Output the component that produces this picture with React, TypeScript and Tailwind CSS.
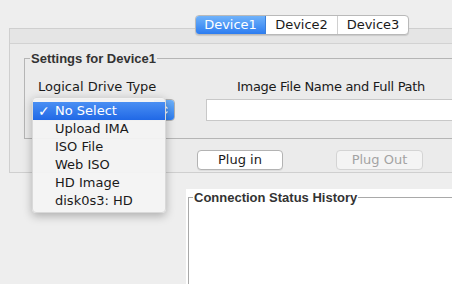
import React from "react";

const font = { fontFamily: '"DejaVu Sans", "Liberation Sans", sans-serif' };
const boldFont = { fontFamily: '"Liberation Sans", Arial, sans-serif' };

const items = ["No Select", "Upload IMA", "ISO File", "Web ISO", "HD Image", "disk0s3: HD"];

export default function App() {
  return (
    <div
      className="relative w-[452px] h-[284px] overflow-hidden bg-[#eeeeee] text-[13px] text-[#1a1a1a]"
      style={font}
    >
      {/* Tabs */}
      <div className="relative z-10 flex pt-[15px] pl-[195px] -mb-[7px]">
        <div className="flex h-[20px] rounded-[4px] border border-[#b9b9b9] bg-white shadow-[0_1px_1px_rgba(0,0,0,0.12)] overflow-hidden leading-[18px]">
          <div className="w-[70px] text-center text-white bg-gradient-to-b from-[#6fb2fa] to-[#2c7cf0] border-r border-[#3b7fd8]">
            Device1
          </div>
          <div className="w-[72px] text-center border-r border-[#d0d0d0]">Device2</div>
          <div className="w-[70px] text-center">Device3</div>
        </div>
      </div>

      {/* Tab panel */}
      <div className="ml-[9px] border-t border-l border-b border-[#cfcfcf] bg-[#ebebeb]">
        <div className="h-[15px] bg-[#e5e5e5] border-b border-[#d2d2d2]" />
        <div className="pl-[14px] pt-[7px] pb-[2px]">
          <fieldset className="border-t border-l border-b border-[#b5b5b5] pb-[17px] pl-[5px]">
            <legend
              className="px-[1px] text-[13px] font-bold leading-[15px] text-[#333]"
              style={boldFont}
            >
              Settings for Device1
            </legend>
            <div className="flex mt-[13px] pl-[3px]">
              <div className="w-[142px] shrink-0">
                <div className="pl-[5px] leading-[16px]">Logical Drive Type</div>
                <div className="mt-[4px] flex h-[22px] rounded-[4px] border border-[#b0b0b0] bg-white overflow-hidden">
                  <div className="flex-1" />
                  <div className="w-[20px] bg-gradient-to-b from-[#6fb2fa] to-[#2c7cf0] flex flex-col items-center justify-center gap-[2px]">
                    <svg width="7" height="4" viewBox="0 0 7 4">
                      <path d="M0.5 3.5 L3.5 0.5 L6.5 3.5" fill="none" stroke="white" strokeWidth="1.2" />
                    </svg>
                    <svg width="7" height="4" viewBox="0 0 7 4">
                      <path d="M0.5 0.5 L3.5 3.5 L6.5 0.5" fill="none" stroke="white" strokeWidth="1.2" />
                    </svg>
                  </div>
                </div>
              </div>
              <div className="ml-[31px] flex-1">
                <div className="pl-[31px] leading-[16px] tracking-[-0.3px]">Image File Name and Full Path</div>
                <div className="mt-[4px] h-[22px] border border-[#c8c8c8] border-r-0 bg-white" />
              </div>
            </div>
          </fieldset>

          <div className="flex mt-[11px] pl-[173px] gap-[53px]">
            <div className="w-[86px] h-[20px] rounded-[4px] border border-[#b3b3b3] bg-white text-center leading-[18px] shadow-[0_1px_0_rgba(0,0,0,0.06)]">
              Plug in
            </div>
            <div className="w-[87px] h-[20px] rounded-[4px] border border-[#d4d4d4] bg-[#f4f4f4] text-center leading-[18px] text-[#a3a3a3]">
              Plug Out
            </div>
          </div>
        </div>
      </div>

      {/* Connection status */}
      <div className="ml-[186px] mt-[16px] h-[120px] bg-white pl-[2px] pt-[1px]">
        <fieldset className="border-t border-l border-[#a9a9a9] h-[110px]">
          <legend
            className="ml-[4px] px-[1px] text-[13px] font-bold leading-[15px] text-[#333]"
            style={boldFont}
          >
            Connection Status History
          </legend>
        </fieldset>
      </div>

      {/* Popup menu */}
      <div className="absolute left-[32px] top-[97px] w-[134px] h-[116px] bg-[#f3f3f3]/95 rounded-[4px] shadow-[0_3px_10px_rgba(0,0,0,0.28)] border border-[#d9d9d9] pt-[4px]">
        {items.map((it, i) => (
          <div
            key={it}
            className={
              i === 0
                ? "flex h-[18px] leading-[18px] bg-gradient-to-b from-[#4a8ff3] to-[#2068e6] text-white"
                : "flex h-[18px] leading-[18px]"
            }
          >
            <span className="w-[22px] pl-[5px] text-[14px]">{i === 0 ? "✓" : ""}</span>
            <span>{it}</span>
          </div>
        ))}
      </div>
    </div>
  );
}
